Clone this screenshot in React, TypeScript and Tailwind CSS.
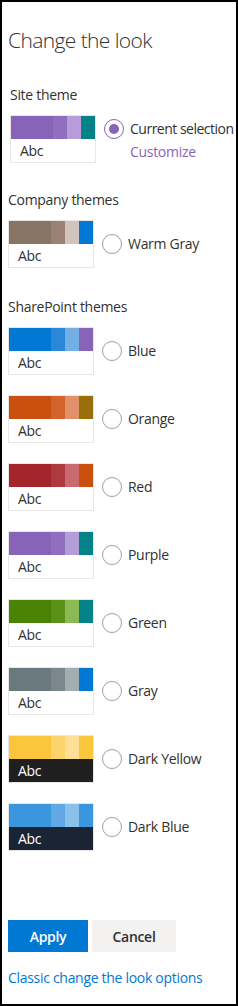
import React from "react";

type Theme = {
  name: string;
  bars: [string, string, string, string];
  bottom: string;
  abc: string;
};

const sharePointThemes: Theme[] = [
  { name: "Blue", bars: ["bg-[#0078d4]", "bg-[#2b88d8]", "bg-[#71afe5]", "bg-[#8764b8]"], bottom: "bg-white", abc: "text-[#323130]" },
  { name: "Orange", bars: ["bg-[#ca5010]", "bg-[#d4622b]", "bg-[#e0916a]", "bg-[#986f0b]"], bottom: "bg-white", abc: "text-[#323130]" },
  { name: "Red", bars: ["bg-[#a4262c]", "bg-[#ae3a40]", "bg-[#c86a70]", "bg-[#ca5010]"], bottom: "bg-white", abc: "text-[#323130]" },
  { name: "Purple", bars: ["bg-[#8764b8]", "bg-[#906fbf]", "bg-[#b49dd8]", "bg-[#038387]"], bottom: "bg-white", abc: "text-[#323130]" },
  { name: "Green", bars: ["bg-[#498205]", "bg-[#5a9218]", "bg-[#8bb954]", "bg-[#038387]"], bottom: "bg-white", abc: "text-[#323130]" },
  { name: "Gray", bars: ["bg-[#69797e]", "bg-[#7b878b]", "bg-[#a2aeb1]", "bg-[#0078d4]"], bottom: "bg-white", abc: "text-[#323130]" },
  { name: "Dark Yellow", bars: ["bg-[#fcc63c]", "bg-[#fdd36b]", "bg-[#fedf96]", "bg-[#fcc63c]"], bottom: "bg-[#1f1f1f]", abc: "text-white" },
  { name: "Dark Blue", bars: ["bg-[#3a96dd]", "bg-[#60a9e4]", "bg-[#8ac1ec]", "bg-[#3a96dd]"], bottom: "bg-[#1b2434]", abc: "text-white" },
];

const purple: Theme = {
  name: "Current selection",
  bars: ["bg-[#8764b8]", "bg-[#906fbf]", "bg-[#b49dd8]", "bg-[#038387]"],
  bottom: "bg-white",
  abc: "text-[#323130]",
};

const warmGray: Theme = {
  name: "Warm Gray",
  bars: ["bg-[#877465]", "bg-[#9a8171]", "bg-[#d1c4bd]", "bg-[#0078d4]"],
  bottom: "bg-white",
  abc: "text-[#323130]",
};

function Swatch({ theme }: { theme: Theme }) {
  return (
    <div className="w-[86px] h-[48px] shrink-0 border border-[#e8e6e4] flex flex-col">
      <div className="flex h-[23px]">
        <div className={`w-[42px] ${theme.bars[0]}`} />
        <div className={`w-[14px] ${theme.bars[1]}`} />
        <div className={`w-[14px] ${theme.bars[2]}`} />
        <div className={`w-[14px] ${theme.bars[3]}`} />
      </div>
      <div className={`h-[23px] pl-[9px] text-[14px] leading-[23px] ${theme.bottom} ${theme.abc}`}>Abc</div>
    </div>
  );
}

function Radio({ checked }: { checked?: boolean }) {
  return checked ? (
    <div className="w-5 h-5 shrink-0 rounded-full border border-[#8764b8] flex items-center justify-center">
      <div className="w-[10px] h-[10px] rounded-full bg-[#8764b8]" />
    </div>
  ) : (
    <div className="w-5 h-5 shrink-0 rounded-full border border-[#a19f9d]" />
  );
}

function ThemeRow({ theme }: { theme: Theme }) {
  return (
    <div className="flex items-center">
      <Swatch theme={theme} />
      <div className="ml-[8px]">
        <Radio />
      </div>
      <span className="ml-[6px] text-[14px] leading-5">{theme.name}</span>
    </div>
  );
}

export default function App() {
  return (
    <div className="w-[238px] h-[1006px] border-2 border-black bg-white pl-[6px] flex flex-col text-[#323130] tracking-[-0.3px] font-['Open_Sans',sans-serif]">
      <h1 className="mt-[24px] h-7 text-[21px] leading-7 font-light tracking-[-0.6px]">Change the look</h1>

      <div className="pl-[2px] flex flex-col">
        <div className="mt-[31px] text-[14px] leading-5">Site theme</div>
        <div className="mt-[10px] flex">
          <Swatch theme={purple} />
          <div className="ml-[8px] mt-[4px] flex flex-col">
            <div className="flex items-center">
              <Radio checked />
              <span className="ml-[6px] text-[14px] leading-5 whitespace-nowrap tracking-[-0.5px]">Current selection</span>
            </div>
            <span className="mt-[3px] ml-[26px] text-[14px] leading-5 text-[#8764b8]">Customize</span>
          </div>
        </div>
      </div>

      <div className="mt-[27px] text-[14px] leading-5">Company themes</div>
      <div className="mt-[10px]">
        <ThemeRow theme={warmGray} />
      </div>

      <div className="mt-[29px] text-[14px] leading-5">SharePoint themes</div>
      <div className="mt-[10px] flex flex-col gap-[20px]">
        {sharePointThemes.map((t) => (
          <ThemeRow key={t.name} theme={t} />
        ))}
      </div>

      <div className="mt-[69px] flex gap-[4px]">
        <button className="w-[80px] h-8 bg-[#0078d4] text-white text-[14px] font-semibold">Apply</button>
        <button className="w-[84px] h-8 bg-[#f3f2f1] text-[#323130] text-[14px] font-semibold">Cancel</button>
      </div>

      <a className="mt-[16px] text-[14px] leading-5 text-[#0078d4] whitespace-nowrap">Classic change the look options</a>
    </div>
  );
}
